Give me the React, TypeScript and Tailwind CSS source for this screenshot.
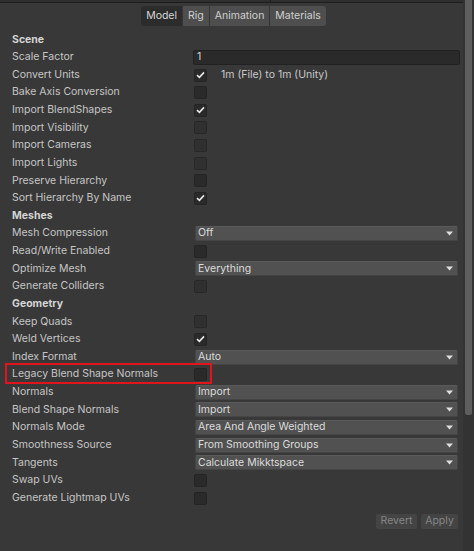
import React from "react";

type Row =
  | { kind: "header"; label: string }
  | { kind: "check"; label: string; checked?: boolean; dim?: boolean; extra?: string }
  | { kind: "select"; label: string; value: string }
  | { kind: "text"; label: string; value: string };

const rows: Row[] = [
  { kind: "header", label: "Scene" },
  { kind: "text", label: "Scale Factor", value: "1" },
  { kind: "check", label: "Convert Units", checked: true, extra: "1m (File) to 1m (Unity)" },
  { kind: "check", label: "Bake Axis Conversion" },
  { kind: "check", label: "Import BlendShapes", checked: true },
  { kind: "check", label: "Import Visibility", dim: true },
  { kind: "check", label: "Import Cameras", dim: true },
  { kind: "check", label: "Import Lights", dim: true },
  { kind: "check", label: "Preserve Hierarchy" },
  { kind: "check", label: "Sort Hierarchy By Name", checked: true },
  { kind: "header", label: "Meshes" },
  { kind: "select", label: "Mesh Compression", value: "Off" },
  { kind: "check", label: "Read/Write Enabled" },
  { kind: "select", label: "Optimize Mesh", value: "Everything" },
  { kind: "check", label: "Generate Colliders", dim: true },
  { kind: "header", label: "Geometry" },
  { kind: "check", label: "Keep Quads", dim: true },
  { kind: "check", label: "Weld Vertices", checked: true },
  { kind: "select", label: "Index Format", value: "Auto" },
  { kind: "check", label: "Legacy Blend Shape Normals" },
  { kind: "select", label: "Normals", value: "Import" },
  { kind: "select", label: "Blend Shape Normals", value: "Import" },
  { kind: "select", label: "Normals Mode", value: "Area And Angle Weighted" },
  { kind: "select", label: "Smoothness Source", value: "From Smoothing Groups" },
  { kind: "select", label: "Tangents", value: "Calculate Mikktspace" },
  { kind: "check", label: "Swap UVs" },
  { kind: "check", label: "Generate Lightmap UVs" },
];

function Checkbox({ checked, dim }: { checked?: boolean; dim?: boolean }) {
  return (
    <div
      className={`w-[13px] h-[13px] rounded-[2px] border border-[#242424] flex items-center justify-center ${
        dim ? "bg-[#2f2f2f] opacity-80" : "bg-[#2a2a2a]"
      }`}
    >
      {checked && (
        <svg width="9" height="8" viewBox="0 0 9 8">
          <polyline points="1,4.2 3.4,6.4 8,1.4" fill="none" stroke="#e6e6e6" strokeWidth="1.6" />
        </svg>
      )}
    </div>
  );
}

function Select({ value }: { value: string }) {
  return (
    <div className="ml-[1px] h-[15px] flex-1 flex items-center justify-between rounded-[2px] bg-[#515151] border border-[#454545] border-t-[#5a5a5a] pl-[2px] pr-[4px]">
      <span className="text-[10.5px] text-[#dcdcdc] leading-none">{value}</span>
      <svg width="7" height="5" viewBox="0 0 7 5">
        <polygon points="0,0.5 7,0.5 3.5,4.5" fill="#dedede" />
      </svg>
    </div>
  );
}

function Field({ row }: { row: Row }) {
  if (row.kind === "text") {
    return (
      <div className="-ml-[1px] -mr-[2px] h-[15px] flex-1 flex items-center rounded-[2px] bg-[#2a2a2a] border border-[#212121] pl-[3px]">
        <span className="text-[10.5px] text-[#d2d2d2] leading-none">{row.value}</span>
      </div>
    );
  }
  if (row.kind === "select") return <Select value={row.value} />;
  if (row.kind === "check") {
    return (
      <div className="flex items-center">
        <Checkbox checked={row.checked} dim={row.dim} />
        {row.extra && (
          <span className="ml-[14px] text-[10.5px] text-[#c8c8c8] leading-none">{row.extra}</span>
        )}
      </div>
    );
  }
  return null;
}

const tabs = ["Model", "Rig", "Animation", "Materials"];

export default function App() {
  return (
    <div className="relative w-[474px] h-[551px] overflow-hidden bg-[#383838] flex font-['Inter','Noto_Sans',sans-serif]">
      <div className="w-[463px] flex flex-col">
        {/* remnant of the header above */}
        <div className="relative h-[3px] bg-[#2f2f2f] border-b border-[#1d1d1d]">
          <div className="absolute left-[270px] top-0 w-[1px] h-[3px] bg-[#1d1d1d]" />
        </div>

        {/* tabs */}
        <div className="mt-[3px] flex justify-center pl-[4px]">
          <div className="flex h-[20px] rounded-[3px] overflow-hidden">
            {tabs.map((t, i) => (
              <div
                key={t}
                className={`h-full flex items-center justify-center px-[5px] text-[10.5px] leading-none ${
                  i === 0
                    ? "bg-[#2c2c2c] text-[#d6d6d6]"
                    : "bg-[#4e4e4e] text-[#d0d0d0] border-l border-[#353535]"
                }`}
              >
                {t}
              </div>
            ))}
          </div>
        </div>

        {/* property rows */}
        <div className="mt-[5px] flex flex-col">
          {rows.map((row, i) => (
            <div key={i} className="h-[17.64px] flex items-center pl-[12px] pr-[5px]">
              {row.kind === "header" ? (
                <span className="text-[10.5px] font-bold text-[#d4d4d4] leading-none">{row.label}</span>
              ) : (
                <>
                  <span className="w-[182px] shrink-0 text-[10.5px] text-[#c6c6c6] leading-none whitespace-nowrap">
                    {row.label}
                  </span>
                  <Field row={row} />
                </>
              )}
            </div>
          ))}
        </div>

        {/* buttons */}
        <div className="mt-[7px] flex justify-end gap-[4px] pr-[5px]">
          <div className="w-[41px] h-[15px] rounded-[2px] bg-[#444444] flex items-center justify-center text-[10.5px] text-[#858585] leading-none">
            Revert
          </div>
          <div className="w-[37px] h-[15px] rounded-[2px] bg-[#444444] flex items-center justify-center text-[10.5px] text-[#858585] leading-none">
            Apply
          </div>
        </div>
      </div>

      {/* scrollbar */}
      <div className="w-[11px] h-full bg-[#333333] pl-[2px] pr-[2px]">
        <div className="w-full h-[415px] bg-[#5e5e5e] rounded-b-[2px]" />
      </div>

      {/* highlight box */}
      <div className="absolute left-[5px] top-[363px] w-[207px] h-[21px] border-2 border-[#e0141a]" />
    </div>
  );
}
